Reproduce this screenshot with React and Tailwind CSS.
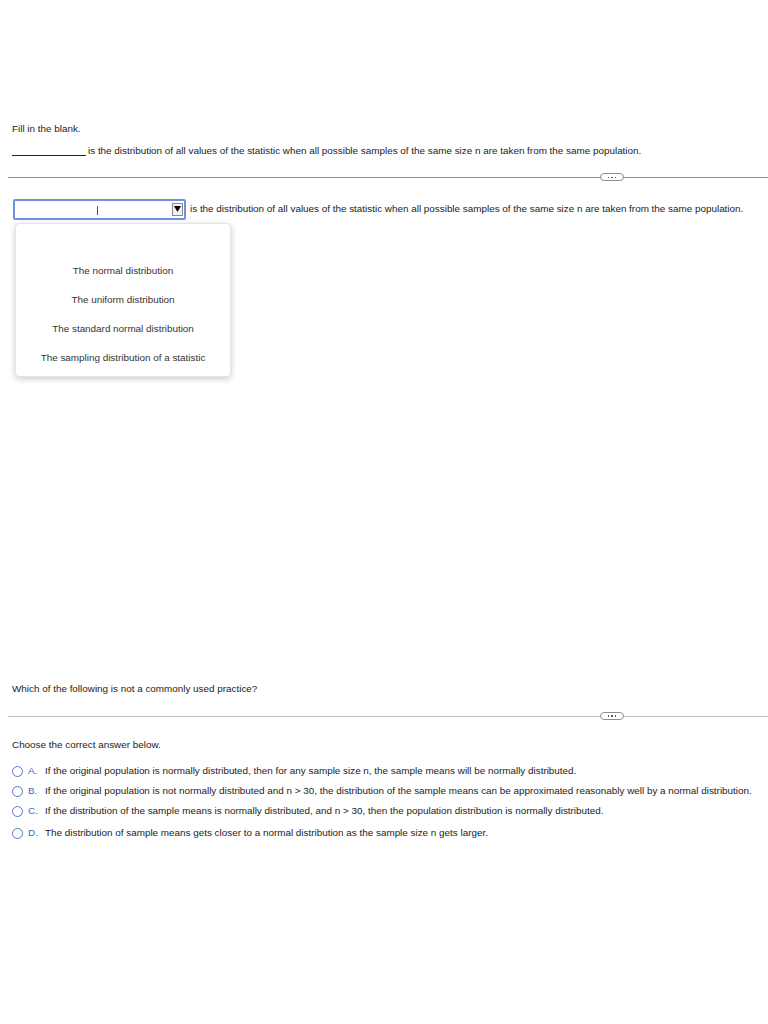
export default function App() {
  const font = { fontFamily: '"Liberation Sans", Arial, sans-serif' };
  const options = [
    ["A.", "If the original population is normally distributed, then for any sample size n, the sample means will be normally distributed."],
    ["B.", "If the original population is not normally distributed and n > 30, the distribution of the sample means can be approximated reasonably well by a normal distribution."],
    ["C.", "If the distribution of the sample means is normally distributed, and n > 30, then the population distribution is normally distributed."],
    ["D.", "The distribution of sample means gets closer to a normal distribution as the sample size n gets larger."],
  ];
  const Pill = () => (
    <div className="absolute left-[592px] top-1/2 -translate-y-1/2 w-[24px] h-[8px] rounded-full border border-[#8a8f96] bg-white flex items-center justify-center gap-[2px]">
      <span className="w-[1.5px] h-[1.5px] bg-[#555]" />
      <span className="w-[1.5px] h-[1.5px] bg-[#555]" />
      <span className="w-[1.5px] h-[1.5px] bg-[#555]" />
    </div>
  );
  return (
    <div className="w-[768px] h-[1024px] bg-white text-[9.9px] text-[#222] leading-none relative" style={font}>
      <div className="pt-[124px] pl-[12px]">Fill in the blank.</div>
      <div className="pt-[12px] pl-[12px] flex items-end">
        <span className="inline-block w-[74px] border-b border-[#222] mr-[2px]" />
        <span>is the distribution of all values of the statistic when all possible samples of the same size n are taken from the same population.</span>
      </div>
      <div className="relative mt-[21px] ml-[8px] h-[1px] bg-[#8f8f8f]">
        <Pill />
      </div>
      <div className="relative mt-[21px] ml-[13px] flex items-center">
        <div className="w-[173px] h-[21px] border-2 border-[#6d93e0] rounded-[2px] flex items-center justify-end relative bg-white">
          <span className="absolute left-[82px] top-[5px] w-[1px] h-[9px] bg-[#555]" />
          <div className="w-[11px] h-[13px] border border-[#888] bg-[#f2f2f2] mr-[1px] flex items-center justify-center">
            <svg width="7" height="6" viewBox="0 0 7 6"><path d="M0 0 L7 0 L3.5 6 Z" fill="#000" /></svg>
          </div>
        </div>
        <span className="ml-[4px]">is the distribution of all values of the statistic when all possible samples of the same size n are taken from the same population.</span>
        <div className="absolute left-[2px] top-[24px] w-[216px] h-[154px] bg-white rounded-[4px] border border-[#e4e4e4] shadow-[0_2px_6px_rgba(0,0,0,0.2)] flex flex-col items-center pt-[42px] gap-[19px] text-[#333]">
          <div>The normal distribution</div>
          <div>The uniform distribution</div>
          <div>The standard normal distribution</div>
          <div>The sampling distribution of a statistic</div>
        </div>
      </div>
      <div className="pt-[464px] pl-[12px]">Which of the following is not a commonly used practice?</div>
      <div className="relative mt-[22px] ml-[8px] h-[1px] bg-[#bdbdbd]">
        <Pill />
      </div>
      <div className="pt-[23px] pl-[12px]">Choose the correct answer below.</div>
      <div className="pt-[16px] pl-[12px] flex flex-col gap-[9px]">
        {options.map(([l, t], i) => (
          <div key={l} className={"flex items-center " + (i === 3 ? "mt-[2px]" : "")}>
            <span className="w-[11px] h-[11px] rounded-full border border-[#4a7bc9] mr-[5px]" />
            <span className="text-[#2f6cc6] w-[17px]">{l}</span>
            <span>{t}</span>
          </div>
        ))}
      </div>
    </div>
  );
}
